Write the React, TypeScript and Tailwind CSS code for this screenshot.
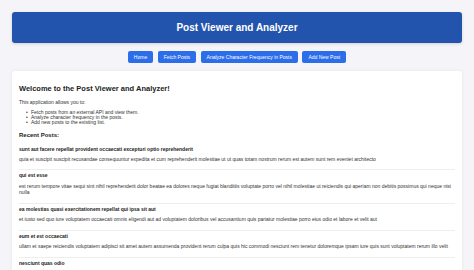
import * as React from "react"

const posts = [
  {
    id: 1,
    title: "sunt aut facere repellat provident occaecati excepturi optio reprehenderit",
    body: "quia et suscipit suscipit recusandae consequuntur expedita et cum reprehenderit molestiae ut ut quas totam nostrum rerum est autem sunt rem eveniet architecto",
  },
  {
    id: 2,
    title: "qui est esse",
    body: "est rerum tempore vitae sequi sint nihil reprehenderit dolor beatae ea dolores neque fugiat blanditiis voluptate porro vel nihil molestiae ut reiciendis qui aperiam non debitis possimus qui neque nisi nulla",
  },
  {
    id: 3,
    title: "ea molestias quasi exercitationem repellat qui ipsa sit aut",
    body: "et iusto sed quo iure voluptatem occaecati omnis eligendi aut ad voluptatem doloribus vel accusantium quis pariatur molestiae porro eius odio et labore et velit aut",
  },
  {
    id: 4,
    title: "eum et est occaecati",
    body: "ullam et saepe reiciendis voluptatem adipisci sit amet autem assumenda provident rerum culpa quis hic commodi nesciunt rem tenetur doloremque ipsam iure quis sunt voluptatem rerum illo velit",
  },
  {
    id: 5,
    title: "nesciunt quas odio",
    body: "repudiandae veniam quaerat sunt sed alias aut fugiat sit autem sed est voluptatem omnis possimus esse voluptatibus quis est aut tenetur dolor neque",
  },
]

const navItems = ["Home", "Fetch Posts", "Analyze Character Frequency in Posts", "Add New Post"]

const features = [
  "Fetch posts from an external API and view them.",
  "Analyze character frequency in the posts.",
  "Add new posts to the existing list.",
]

export default function App() {
  return (
    <div className="min-h-screen bg-[#f4f4f9] px-3 pt-3 font-['Liberation_Sans',Arial,sans-serif] text-[#333]">
      <header className="flex h-[31px] items-center justify-center rounded-[3px] bg-[#2354ad] shadow-[0_1px_3px_rgba(0,0,0,0.15)]">
        <h1 className="text-[10px] font-bold leading-none text-white">Post Viewer and Analyzer</h1>
      </header>

      <nav className="mt-2 flex justify-center gap-[4.5px]">
        {navItems.map((item) => (
          <button
            key={item}
            type="button"
            className="flex h-3 items-center rounded-[2px] bg-[#2c6de9] px-[6px] text-[5px] leading-none text-white"
          >
            {item}
          </button>
        ))}
      </nav>

      <main className="mt-2 rounded-[3px] bg-white px-[7px] pt-[13px] pb-4 shadow-[0_0_4px_rgba(0,0,0,0.06)]">
        <h2 className="text-[7.5px] font-bold leading-[9px] text-[#222]">Welcome to the Post Viewer and Analyzer!</h2>
        <p className="mt-[6px] text-[5px] leading-[6px]">This application allows you to:</p>
        <ul className="mt-[4.5px] pl-[7px] text-[5px] leading-[5px]">
          {features.map((f) => (
            <li key={f} className="flex">
              <span className="w-[5px] shrink-0">•</span>
              <span>{f}</span>
            </li>
          ))}
        </ul>

        <h3 className="mt-[7.5px] text-[6px] font-bold leading-[7px] text-[#222]">Recent Posts:</h3>
        <ul className="mt-[4.5px]">
          {posts.map((post) => (
            <li key={post.id} className="border-b border-[#eeeeee] pt-[2px] pb-[7px]">
              <h4 className="text-[5px] font-bold leading-[6px] text-[#222]">{post.title}</h4>
              <p className="mt-[4.5px] text-[5px] leading-[6.4px]">{post.body}</p>
            </li>
          ))}
        </ul>
      </main>
    </div>
  )
}
